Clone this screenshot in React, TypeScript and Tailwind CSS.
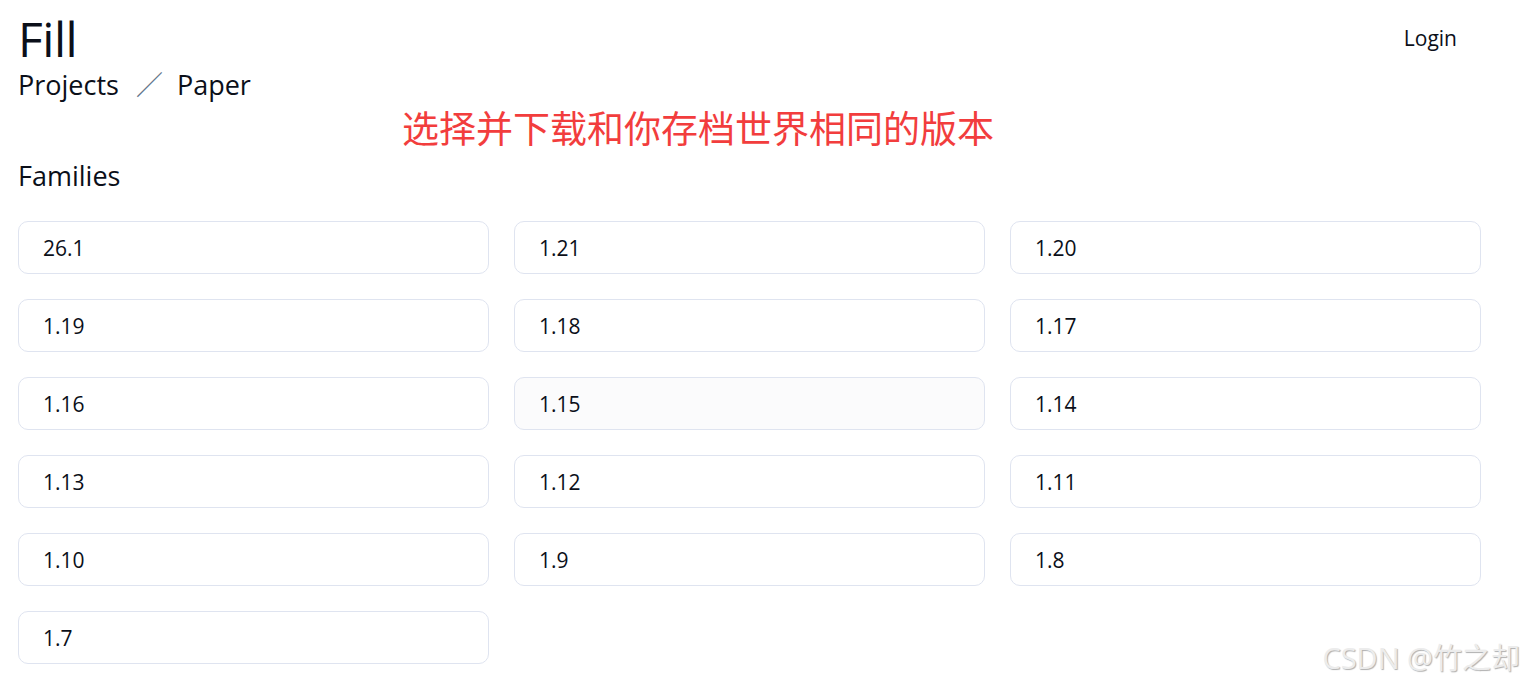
import React from 'react';

const versions = ['26.1', '1.21', '1.20', '1.19', '1.18', '1.17', '1.16', '1.15', '1.14', '1.13', '1.12', '1.11', '1.10', '1.9', '1.8', '1.7'];

export default function App() {
  return (
    <div
      className="relative min-h-screen bg-white text-[#0b0f19]"
      style={{ fontFamily: '"Open Sans", "Noto Sans", "Noto Sans CJK SC", sans-serif' }}
    >
      {/* header */}
      <div className="flex items-start justify-between pl-[18px] pr-[70px]">
        <div>
          <h1 className="text-[48px] leading-[56px] mt-[11px] tracking-[-0.5px]">Fill</h1>
          <div className="flex items-center text-[27px] leading-[34px] mt-[1px]">
            <span>Projects</span>
            <span className="ml-[17px] mr-[14px] text-[#64748b]">／</span>
            <span>Paper</span>
          </div>
        </div>
        <button className="text-[21px] mt-[23px]">Login</button>
      </div>

      <h2 className="pl-[18px] mt-[57px] text-[27px] leading-[34px]">Families</h2>

      <div className="grid grid-cols-[repeat(3,471px)] gap-x-[25px] gap-y-[25px] pl-[18px] mt-[28px]">
        {versions.map((v) => (
          <div
            key={v}
            className={`h-[53px] flex items-center px-[24px] pt-[3px] rounded-[10px] border border-[#dfe4f0] text-[21px] ${
              v === '1.15' ? 'bg-[#fbfbfc]' : 'bg-white'
            }`}
          >
            {v}
          </div>
        ))}
      </div>

      {/* 标注 */}
      <div className="absolute left-[402px] top-[104px] text-[37px] leading-[50px] text-[#f23d3d]">
        选择并下载和你存档世界相同的版本
      </div>

      {/* 水印 */}
      <div
        className="absolute right-[7px] bottom-[8px] text-[29px] text-[#ececec]"
        style={{ textShadow: '1px 1px 1px #b0b0b0' }}
      >
        CSDN @竹之却
      </div>
    </div>
  );
}
